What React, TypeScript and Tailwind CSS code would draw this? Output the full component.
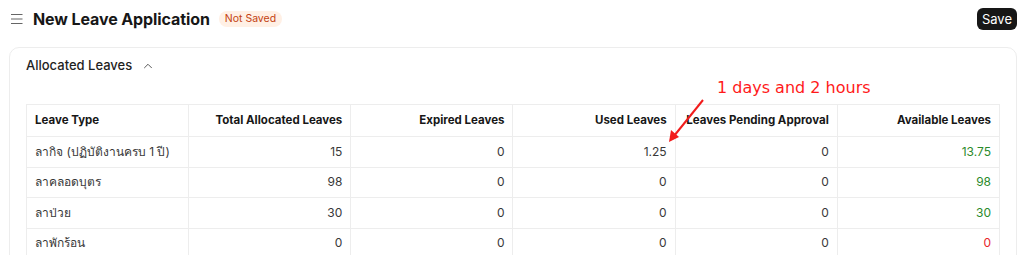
import { ChevronUp } from 'lucide-react';

type Row = {
  leaveType: string;
  total: string;
  expired: string;
  used: string;
  pending: string;
  available: string;
};

const ROWS: Row[] = [
  { leaveType: 'ลากิจ (ปฏิบัติงานครบ 1 ปี)', total: '15', expired: '0', used: '1.25', pending: '0', available: '13.75' },
  { leaveType: 'ลาคลอดบุตร', total: '98', expired: '0', used: '0', pending: '0', available: '98' },
  { leaveType: 'ลาป่วย', total: '30', expired: '0', used: '0', pending: '0', available: '30' },
  { leaveType: 'ลาพักร้อน', total: '0', expired: '0', used: '0', pending: '0', available: '0' },
];

const HEADERS = ['Total Allocated Leaves', 'Expired Leaves', 'Used Leaves', 'Leaves Pending Approval', 'Available Leaves'];

export default function App() {
  return (
    <div className="relative w-[1035px] h-[255px] overflow-hidden bg-white text-[#171717] font-['Inter','Noto_Sans',sans-serif]">
      {/* page header */}
      <div className="flex items-center h-[38px] pl-[10px] pr-[18px]">
        <svg width="13" height="12" viewBox="0 0 13 12" className="text-[#666]">
          <path d="M1 1.5h11.5M1 6h11.5M1 10.5h11.5" stroke="currentColor" strokeWidth="1.1" />
        </svg>
        <h1 className="ml-[10px] text-[16px] font-bold tracking-[-0.1px]">New Leave Application</h1>
        <span className="ml-[9px] px-[6px] h-[16px] leading-[16px] rounded-full bg-[#fff0e5] text-[#c4420f] text-[10.5px]">
          Not Saved
        </span>
        <button className="ml-auto h-[22px] px-[5px] rounded-[6px] bg-[#171717] text-white text-[13px] leading-[22px]">
          Save
        </button>
      </div>

      {/* section card */}
      <div className="mt-[9px] ml-[9px] mr-[18px] border border-[#ededed] rounded-[10px] px-4 pt-[8px] pb-4">
        <div className="flex items-center h-[20px] text-[13px] font-medium text-[#1f1f1f]">
          Allocated Leaves
          <ChevronUp className="ml-[9px] w-[14px] h-[14px] text-[#444]" strokeWidth={1.5} />
        </div>

        <table className="mt-[28px] w-full table-fixed border-collapse text-[12px]">
          <thead>
            <tr className="h-[32px] text-[11.5px]">
              <th className="border border-[#ededed] px-2 text-left font-bold">Leave Type</th>
              {HEADERS.map(h => (
                <th key={h} className="border border-[#ededed] px-2 text-right font-bold whitespace-nowrap">{h}</th>
              ))}
            </tr>
          </thead>
          <tbody className="text-[#383838]">
            {ROWS.map(r => (
              <tr key={r.leaveType} className="h-[30.5px]">
                <td className="border border-[#ededed] px-2 text-left">{r.leaveType}</td>
                <td className="border border-[#ededed] px-2 text-right">{r.total}</td>
                <td className="border border-[#ededed] px-2 text-right">{r.expired}</td>
                <td className="border border-[#ededed] px-2 text-right">{r.used}</td>
                <td className="border border-[#ededed] px-2 text-right">{r.pending}</td>
                <td className={`border border-[#ededed] px-2 text-right ${r.available === '0' ? 'text-[#e8262b]' : 'text-[#2b8a2b]'}`}>
                  {r.available}
                </td>
              </tr>
            ))}
          </tbody>
        </table>
      </div>

      {/* annotation */}
      <div className="absolute left-[717px] top-[78px] text-[16px] leading-[20px] text-[#ff1a1a] font-['DejaVu_Sans',sans-serif] whitespace-nowrap">
        1 days and 2 hours
      </div>
      <svg className="absolute left-0 top-0 pointer-events-none" width="1035" height="255">
        <line x1="703" y1="100" x2="674" y2="136" stroke="#f21c1c" strokeWidth="2" />
        <path d="M669 142 L671 130 L679 137 Z" fill="#f21c1c" />
      </svg>
    </div>
  );
}
